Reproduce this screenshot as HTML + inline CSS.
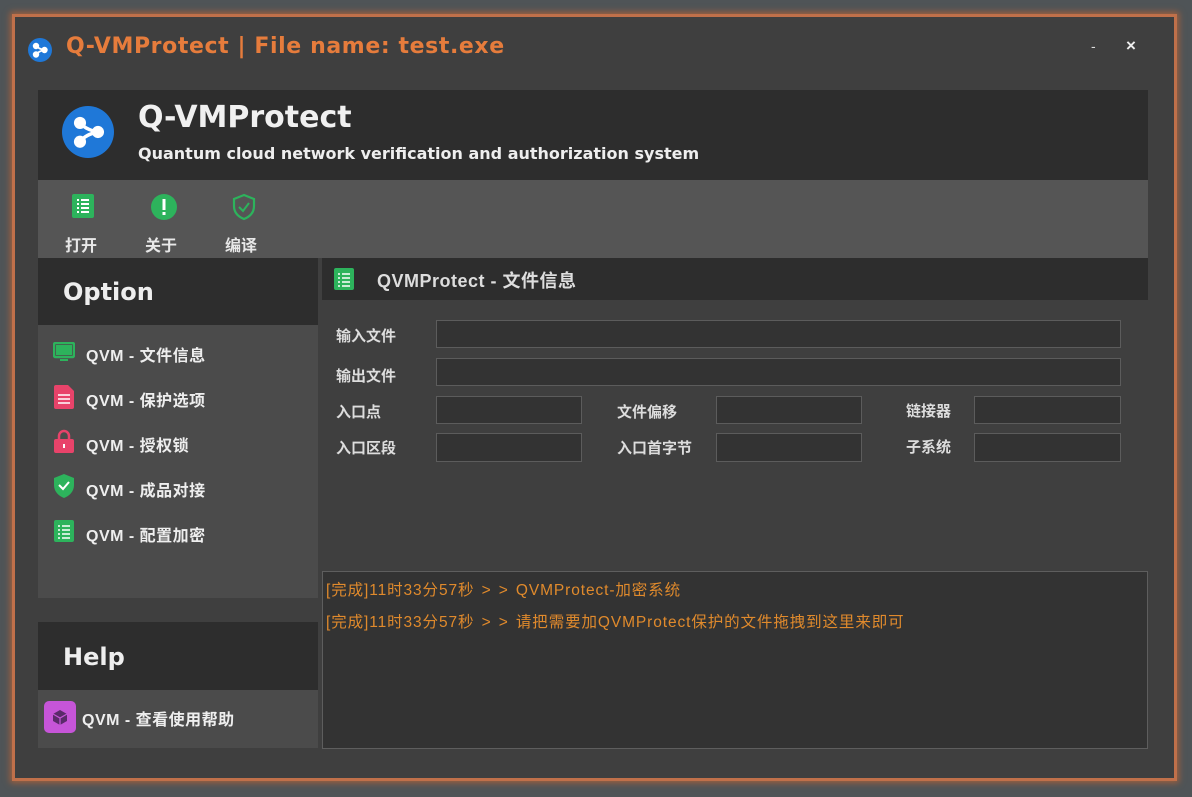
<!DOCTYPE html>
<html><head><meta charset="utf-8"><style>
*{margin:0;padding:0;box-sizing:border-box}
body{width:1192px;height:797px;background:#4f5457;position:relative;overflow:hidden;font-family:"Liberation Sans","Noto Sans CJK SC",sans-serif;color:#e8e8e8}
.abs{position:absolute}
.win{left:12px;top:14px;width:1165px;height:767px;background:#3f3f3f;border:3px solid #c0704a;box-shadow:0 0 6px 2px #a0603e}
.title{left:66px;top:34px;font-size:22px;font-weight:bold;color:#e67c3c;font-family:"DejaVu Sans","Noto Sans CJK SC",sans-serif;letter-spacing:0.6px}
.dark{background:#2d2d2d}
.mid{background:#4b4b4b}
.inp{background:#333;border:1px solid #5c5c5c;position:absolute}
.lbl{position:absolute;font-size:15px;font-weight:bold;color:#ddd}
.item{position:absolute;left:86px;font-size:16px;font-weight:bold;color:#eee;letter-spacing:0.5px}
.log{position:absolute;left:326px;font-size:15.5px;color:#e08a2c;letter-spacing:0.9px;word-spacing:2px}
</style></head><body>
<div class="abs win"></div>
<svg class="abs" style="left:28px;top:38px" width="24" height="24" viewBox="0 0 24 24"><circle cx="12" cy="12" r="12" fill="#1f78d8"/><circle cx="8" cy="8" r="3.2" fill="#fff"/><circle cx="8" cy="16.5" r="3.2" fill="#fff"/><circle cx="16.5" cy="12" r="3.2" fill="#fff"/><path d="M8 8Q11 11 16.5 12Q11 13 8 16.5" stroke="#fff" stroke-width="1.8" fill="none"/></svg>
<div class="abs title">Q-VMProtect | File name: test.exe</div>
<div class="abs" style="left:1091px;top:38px;font-size:14px;color:#ddd">-</div>
<div class="abs" style="left:1126px;top:36px;font-size:17px;font-weight:bold;color:#eee">×</div>

<div class="abs dark" style="left:38px;top:90px;width:1110px;height:90px"></div>
<svg class="abs" style="left:62px;top:106px" width="52" height="52" viewBox="0 0 24 24"><circle cx="12" cy="12" r="12" fill="#1f78d8"/><circle cx="8.3" cy="7.8" r="2.8" fill="#fff"/><circle cx="8.3" cy="16.5" r="2.8" fill="#fff"/><circle cx="16.6" cy="12" r="2.8" fill="#fff"/><path d="M8.3 7.8Q11 11 16.6 12Q11 13 8.3 16.5" stroke="#fff" stroke-width="1.6" fill="none"/></svg>
<div class="abs" style="left:138px;top:100px;font-size:30px;font-weight:bold;color:#f0f0f0;font-family:'DejaVu Sans',sans-serif">Q-VMProtect</div>
<div class="abs" style="left:138px;top:144px;font-size:16px;font-weight:bold;color:#eee;font-family:'DejaVu Sans',sans-serif">Quantum cloud network verification and authorization system</div>

<div class="abs" style="left:38px;top:180px;width:1110px;height:78px;background:#555"></div>
<svg class="abs" style="left:72px;top:194px" width="22" height="24" viewBox="0 0 22 24"><rect width="22" height="24" rx="2" fill="#2db35c"/><path d="M5 6h2M9 6h8M5 10h2M9 10h8M5 14h2M9 14h8M5 18h2M9 18h8" stroke="#fff" stroke-width="2"/></svg>
<svg class="abs" style="left:150px;top:193px" width="28" height="28" viewBox="0 0 28 28"><circle cx="14" cy="14" r="13" fill="#2db35c"/><rect x="12.5" y="6" width="3" height="11" fill="#fff"/><rect x="12.5" y="19" width="3" height="3" fill="#fff"/></svg>
<svg class="abs" style="left:232px;top:193px" width="24" height="28" viewBox="0 0 24 28"><path d="M12 2L22 6V13C22 20 17 24 12 26C7 24 2 20 2 13V6Z" fill="none" stroke="#2db35c" stroke-width="2.2"/><path d="M7 14L11 18L17 10" fill="none" stroke="#2db35c" stroke-width="2"/></svg>
<div class="abs" style="left:65px;top:232px;font-size:16px;font-weight:bold">打开</div>
<div class="abs" style="left:145px;top:232px;font-size:16px;font-weight:bold">关于</div>
<div class="abs" style="left:225px;top:232px;font-size:16px;font-weight:bold">编译</div>

<div class="abs dark" style="left:38px;top:258px;width:280px;height:67px"></div>
<div class="abs" style="left:63px;top:278px;font-size:24px;font-weight:bold;color:#eee;font-family:'DejaVu Sans',sans-serif">Option</div>
<div class="abs mid" style="left:38px;top:325px;width:280px;height:273px"></div>
<svg class="abs" style="left:53px;top:342px" width="22" height="20" viewBox="0 0 22 20"><rect x="1" y="1" width="20" height="14" rx="1.5" fill="none" stroke="#2db35c" stroke-width="2.5"/><rect x="3" y="3" width="16" height="10" fill="#2db35c"/><rect x="7" y="17" width="8" height="2" fill="#2db35c"/></svg>
<div class="item" style="top:342px">QVM - 文件信息</div>
<svg class="abs" style="left:54px;top:385px" width="20" height="24" viewBox="0 0 20 24"><path d="M0 2Q0 0 2 0H14L20 6V22Q20 24 18 24H2Q0 24 0 22Z" fill="#e8436a"/><path d="M4 10h12M4 14h12M4 18h12" stroke="#fff" stroke-width="1.6"/></svg>
<div class="item" style="top:387px">QVM - 保护选项</div>
<svg class="abs" style="left:54px;top:429px" width="20" height="24" viewBox="0 0 20 24"><path d="M5 10V7a5 5 0 0 1 10 0v3" fill="none" stroke="#e8436a" stroke-width="2.5"/><rect x="0" y="10" width="20" height="14" rx="2" fill="#e8436a"/><rect x="9" y="15" width="2" height="4" fill="#fff"/></svg>
<div class="item" style="top:432px">QVM - 授权锁</div>
<svg class="abs" style="left:54px;top:474px" width="20" height="24" viewBox="0 0 20 24"><path d="M10 0L20 4V11C20 18 15 22 10 24C5 22 0 18 0 11V4Z" fill="#2db35c"/><path d="M5 11L9 15L15 8" fill="none" stroke="#fff" stroke-width="2"/></svg>
<div class="item" style="top:477px">QVM - 成品对接</div>
<svg class="abs" style="left:54px;top:520px" width="20" height="22" viewBox="0 0 20 22"><rect width="20" height="22" rx="2" fill="#2db35c"/><path d="M4 6h2M8 6h8M4 10h2M8 10h8M4 14h2M8 14h8M4 18h2M8 18h8" stroke="#fff" stroke-width="1.6"/></svg>
<div class="item" style="top:522px">QVM - 配置加密</div>

<div class="abs dark" style="left:38px;top:622px;width:280px;height:68px"></div>
<div class="abs" style="left:63px;top:643px;font-size:24px;font-weight:bold;color:#eee;font-family:'DejaVu Sans',sans-serif">Help</div>
<div class="abs mid" style="left:38px;top:690px;width:280px;height:58px"></div>
<svg class="abs" style="left:44px;top:701px" width="32" height="32" viewBox="0 0 32 32"><rect width="32" height="32" rx="5" fill="#c655d8"/><path d="M16 9L23 13V20L16 24L9 20V13Z" fill="#5a2a6a"/><path d="M9 13L16 17L23 13M16 17V24" stroke="#c655d8" stroke-width="1.2" fill="none"/></svg>
<div class="item" style="left:82px;top:706px">QVM - 查看使用帮助</div>

<div class="abs dark" style="left:322px;top:258px;width:826px;height:42px"></div>
<svg class="abs" style="left:334px;top:268px" width="20" height="22" viewBox="0 0 20 22"><rect width="20" height="22" rx="2" fill="#2db35c"/><path d="M4 6h2M8 6h8M4 10h2M8 10h8M4 14h2M8 14h8M4 18h2M8 18h8" stroke="#fff" stroke-width="1.6"/></svg>
<div class="abs" style="left:377px;top:267px;font-size:18px;font-weight:bold;color:#ddd;letter-spacing:0.5px">QVMProtect - 文件信息</div>

<div class="lbl" style="left:336px;top:325px">输入文件</div>
<div class="inp" style="left:436px;top:320px;width:685px;height:28px"></div>
<div class="lbl" style="left:336px;top:365px">输出文件</div>
<div class="inp" style="left:436px;top:358px;width:685px;height:28px"></div>
<div class="lbl" style="left:336px;top:401px">入口点</div>
<div class="inp" style="left:436px;top:396px;width:146px;height:28px"></div>
<div class="lbl" style="left:617px;top:401px">文件偏移</div>
<div class="inp" style="left:716px;top:396px;width:146px;height:28px"></div>
<div class="lbl" style="left:906px;top:400px">链接器</div>
<div class="inp" style="left:974px;top:396px;width:147px;height:28px"></div>
<div class="lbl" style="left:336px;top:437px">入口区段</div>
<div class="inp" style="left:436px;top:433px;width:146px;height:29px"></div>
<div class="lbl" style="left:617px;top:437px">入口首字节</div>
<div class="inp" style="left:716px;top:433px;width:146px;height:29px"></div>
<div class="lbl" style="left:906px;top:436px">子系统</div>
<div class="inp" style="left:974px;top:433px;width:147px;height:29px"></div>

<div class="inp" style="left:322px;top:571px;width:826px;height:178px;border-color:#5e5e5e"></div>
<div class="log" style="top:578px">[完成]11时33分57秒 &gt; &gt; QVMProtect-加密系统</div>
<div class="log" style="top:610px">[完成]11时33分57秒 &gt; &gt; 请把需要加QVMProtect保护的文件拖拽到这里来即可</div>
</body></html>
